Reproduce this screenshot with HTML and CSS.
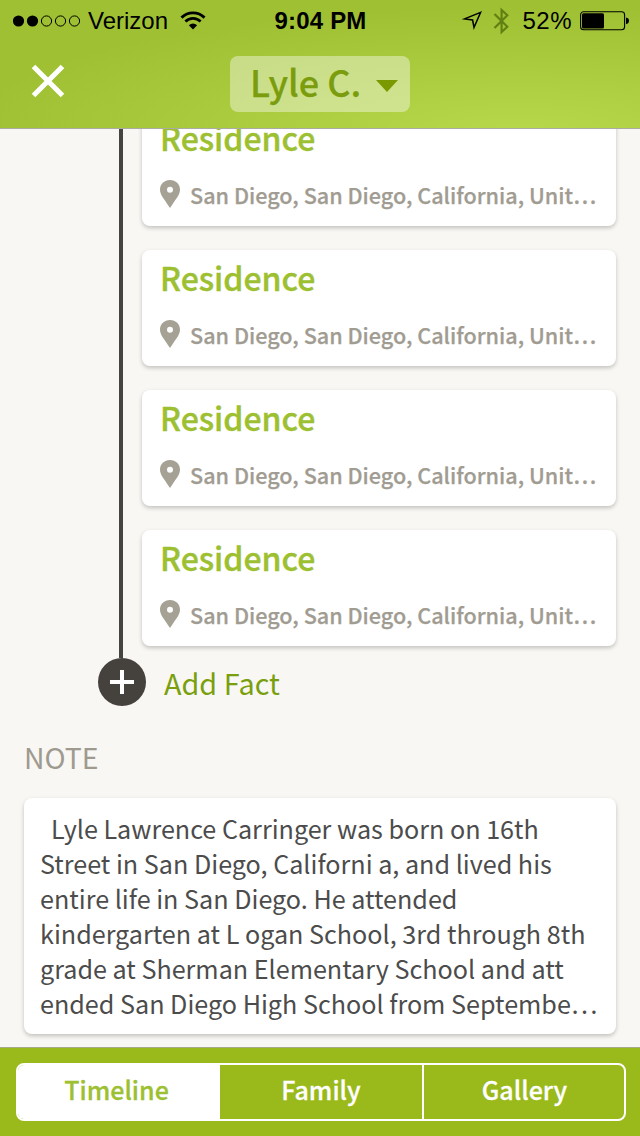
FILE: index.html
```html
<!DOCTYPE html>
<html>

    <head>
        <meta charset="utf-8">
        <title>Lyle C.</title>
        <link rel="stylesheet" href="styles.css">
    </head>

    <body>
        <div class="header">
            <div class="status">
                <div class="status_left">
                    <svg class="signal" width="68" height="12" viewBox="0 0 68 12">
                        <circle cx="5.5" cy="6" r="5.6"></circle>
                        <circle cx="19.5" cy="6" r="5.6"></circle>
                        <circle class="off" cx="33.5" cy="6" r="5.1"></circle>
                        <circle class="off" cx="47.5" cy="6" r="5.1"></circle>
                        <circle class="off" cx="61.5" cy="6" r="5.1"></circle>
                    </svg>
                    <span class="carrier">Verizon</span>
                    <svg class="wifi" width="26" height="19" viewBox="0 0 26 19">
                        <path d="M1.5 6.6 A16.3 16.3 0 0 1 24.5 6.6" fill="none" stroke="#000" stroke-width="2.9"></path>
                        <path d="M5.4 10.5 A10.8 10.8 0 0 1 20.6 10.5" fill="none" stroke="#000" stroke-width="2.7"></path>
                        <path d="M8.8 14.2 A6.5 6.5 0 0 1 17.2 14.2 L13 18.4 Z"></path>
                    </svg>
                </div>
                <span class="time">9:04 PM</span>
                <div class="status_right">
                    <svg class="location" width="24" height="22" viewBox="0 0 24 22">
                        <path d="M20.6 2.4 L4.6 8.9 L12.6 10 L14 17.5 Z" fill="none" stroke="#000" stroke-width="1.5"></path>
                    </svg>
                    <svg class="bluetooth" width="17" height="28" viewBox="0 0 17 28">
                        <path d="M1.5 7 L14.3 19.7 L8.6 25 V3 L14.3 8.3 L1.5 21" fill="none" stroke="#618012" stroke-width="2.2"></path>
                    </svg>
                    <span class="percent">52%</span>
                    <svg class="battery" width="50" height="20" viewBox="0 0 50 20">
                        <rect x="0.6" y="0.8" width="44" height="18" rx="3" fill="none" stroke="#000" stroke-width="1.1"></rect>
                        <rect x="2" y="2.2" width="22" height="15.2" rx="1.5"></rect>
                        <path d="M46 6.5 Q49 7 49 9.8 Q49 12.6 46 13.1 Z"></path>
                    </svg>
                </div>
            </div>
            <div class="nav">
                <svg class="close" width="34" height="34" viewBox="0 0 34 34">
                    <path d="M2.5 2.5 L31.5 31.5 M31.5 2.5 L2.5 31.5" stroke="#fff" stroke-width="5"></path>
                </svg>
                <div class="person">
                    <span>Lyle C.</span>
                    <i class="arrow"></i>
                </div>
            </div>
        </div>

        <div class="content">
            <div class="timeline">
                <div class="fact">
                    <h2>Residence</h2>
                    <p>
                        <svg class="pin" width="20" height="28" viewBox="0 0 20 28">
                            <path fill-rule="evenodd" d="M10 0 C4.2 0 0 4.3 0 9.6 C0 14.8 3.8 18.6 10 28 C16.2 18.6 20 14.8 20 9.6 C20 4.3 15.8 0 10 0 Z M10 6.8 A3 3 0 1 1 10 12.8 A3 3 0 1 1 10 6.8 Z"></path>
                        </svg>
                        <span>San Diego, San Diego, California, Unit…</span>
                    </p>
                </div>
                <div class="fact">
                    <h2>Residence</h2>
                    <p>
                        <svg class="pin" width="20" height="28" viewBox="0 0 20 28">
                            <path fill-rule="evenodd" d="M10 0 C4.2 0 0 4.3 0 9.6 C0 14.8 3.8 18.6 10 28 C16.2 18.6 20 14.8 20 9.6 C20 4.3 15.8 0 10 0 Z M10 6.8 A3 3 0 1 1 10 12.8 A3 3 0 1 1 10 6.8 Z"></path>
                        </svg>
                        <span>San Diego, San Diego, California, Unit…</span>
                    </p>
                </div>
                <div class="fact">
                    <h2>Residence</h2>
                    <p>
                        <svg class="pin" width="20" height="28" viewBox="0 0 20 28">
                            <path fill-rule="evenodd" d="M10 0 C4.2 0 0 4.3 0 9.6 C0 14.8 3.8 18.6 10 28 C16.2 18.6 20 14.8 20 9.6 C20 4.3 15.8 0 10 0 Z M10 6.8 A3 3 0 1 1 10 12.8 A3 3 0 1 1 10 6.8 Z"></path>
                        </svg>
                        <span>San Diego, San Diego, California, Unit…</span>
                    </p>
                </div>
                <div class="fact">
                    <h2>Residence</h2>
                    <p>
                        <svg class="pin" width="20" height="28" viewBox="0 0 20 28">
                            <path fill-rule="evenodd" d="M10 0 C4.2 0 0 4.3 0 9.6 C0 14.8 3.8 18.6 10 28 C16.2 18.6 20 14.8 20 9.6 C20 4.3 15.8 0 10 0 Z M10 6.8 A3 3 0 1 1 10 12.8 A3 3 0 1 1 10 6.8 Z"></path>
                        </svg>
                        <span>San Diego, San Diego, California, Unit…</span>
                    </p>
                </div>
            </div>
            <div class="add">
                <svg width="48" height="48" viewBox="0 0 48 48">
                    <circle cx="24" cy="24" r="24" fill="#45413d"></circle>
                    <path d="M12 24 H36 M24 12 V36" stroke="#fff" stroke-width="4"></path>
                </svg>
                <span>Add Fact</span>
            </div>
            <h3 class="note_title">NOTE</h3>
            <div class="note"><span class="indent"></span>Lyle Lawrence Carringer was born on 16th<br>Street in San Diego, Californi a, and lived his<br>entire life in San Diego. He attended<br>kindergarten at L ogan School, 3rd through 8th<br>grade at Sherman Elementary School and att<br>ended San Diego High School from Septembe…</div>
        </div>

        <div class="footer">
            <div class="tabs">
                <span class="tab on">Timeline</span>
                <span class="tab">Family</span>
                <span class="tab">Gallery</span>
            </div>
        </div>
    </body>

</html>
```
FILE: styles.css
```css
* {
    margin: 0;
    padding: 0;
    box-sizing: border-box;
}

body {
    display: flex;
    flex-direction: column;
    width: 640px;
    height: 1136px;
    overflow: hidden;
    background: #f8f7f3;
    font-family: "Noto Sans CJK SC", "Noto Sans", sans-serif;
}

svg {
    display: block;
    flex: none;
}

.header {
    height: 129px;
    flex: none;
    border-bottom: 1px solid #aaaba3;
    background: radial-gradient(ellipse 560px 125px at 520px 132px, #b7d84b, #9fc033);
}

.status {
    display: grid;
    grid-template-columns: 1fr auto 1fr;
    align-items: center;
    height: 40px;
    padding: 0 11px 0 13px;
    font-family: "Liberation Sans", Arial, sans-serif;
    font-size: 24px;
    line-height: 42px;
}

.status_left,
.status_right {
    display: flex;
    align-items: center;
}

.status_right {
    justify-content: flex-end;
}

.signal .off {
    fill: none;
    stroke: #000;
    stroke-width: 1;
}

.carrier {
    margin-left: 7px;
}

.wifi {
    margin: 0 0 1px 12px;
}

.time {
    margin-right: 1px;
    font-weight: bold;
    letter-spacing: .2px;
}

.bluetooth {
    margin: 0 12px 0 9px;
}

.percent {
    letter-spacing: .5px;
}

.battery {
    margin-left: 8px;
    margin-right: -1px;
}

.nav {
    display: grid;
    grid-template-columns: 1fr 180px 1fr;
    align-items: center;
    height: 88px;
    padding: 0 31px;
}

.close {
    margin-bottom: 6px;
}

.person {
    display: flex;
    align-items: center;
    justify-content: space-between;
    height: 56px;
    padding: 0 12px 0 20px;
    border-radius: 8px;
    background: rgba(255, 255, 255, .4);
    color: #7a9c0d;
    font-size: 36px;
    font-weight: 500;
    line-height: 56px;
    -webkit-text-stroke: .25px #7a9c0d;
}

.person span {
    margin-top: -6px;
}

.arrow {
    border: 11px solid transparent;
    border-top: 12px solid #7a9900;
    border-bottom: 0;
    margin-top: 3px;
}

.content {
    flex: 1;
    overflow: hidden;
}

.timeline {
    margin: -19px 24px 0 119px;
    padding: 0 0 12px 19px;
    border-left: 4px solid #45443e;
}

.fact {
    height: 116px;
    padding: 0 18px;
    margin-bottom: 24px;
    border-radius: 8px;
    background: #fff;
    box-shadow: 0 2px 4px rgba(0, 0, 0, .22);
}

.fact:last-child {
    margin-bottom: 0;
}

.fact h2 {
    color: #9cc031;
    font-size: 32px;
    font-weight: 500;
    line-height: 54px;
    -webkit-text-stroke: .4px #9cc031;
}

.fact p {
    display: flex;
    align-items: center;
    gap: 10px;
    height: 60px;
    color: #a19c92;
    font-size: 21.6px;
    font-weight: 500;
    line-height: 30px;
    white-space: nowrap;
    -webkit-text-stroke: .25px #a19c92;
}

.fact p span {
    padding-top: 2px;
}

.pin {
    fill: #a5a194;
}

.add {
    display: flex;
    align-items: center;
    gap: 18px;
    height: 48px;
    padding-left: 98px;
    color: #7a9f0e;
    font-size: 28.8px;
    line-height: 48px;
}

.add span {
    padding-top: 2px;
}

.note_title {
    margin: 29px 0 19px 24px;
    color: #9f9a90;
    font-size: 28.4px;
    font-weight: normal;
    line-height: 44px;
}

.note {
    height: 236px;
    margin: 0 24px;
    padding: 13px 16px;
    border-radius: 8px;
    background: #fff;
    box-shadow: 0 2px 4px rgba(0, 0, 0, .22);
    color: #4c4c4c;
    font-size: 25.15px;
    line-height: 35px;
    white-space: nowrap;
}

.indent {
    display: inline-block;
    width: 11px;
}

.footer {
    height: 89px;
    flex: none;
    padding: 15px 14px 0 16px;
    border-top: 1px solid #a5ab8a;
    background: #9ab91b;
}

.tabs {
    display: grid;
    grid-template-columns: repeat(3, 202px);
    height: 58px;
    border: 2px solid #fff;
    border-radius: 8px;
    overflow: hidden;
}

.tab {
    color: #fff;
    font-size: 25px;
    font-weight: 500;
    line-height: 49px;
    text-align: center;
    -webkit-text-stroke: .3px;
}

.tab.on {
    padding-right: 5px;
    background: #fff;
    color: #9cc031;
}

.tab:last-child {
    padding-left: 1px;
    border-left: 2px solid #fff;
}
```
